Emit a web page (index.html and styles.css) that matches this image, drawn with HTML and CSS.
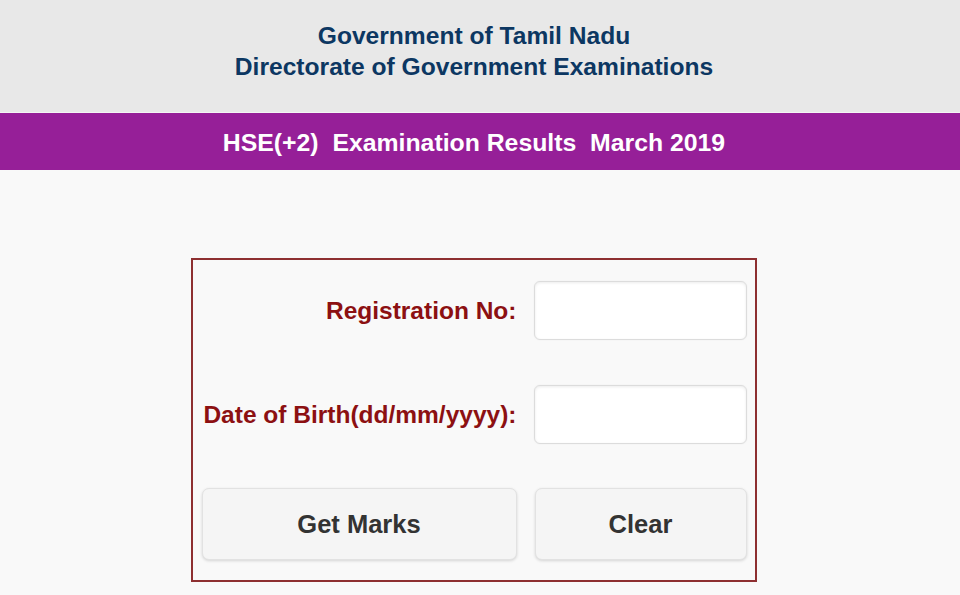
FILE: index.html
```html
<!DOCTYPE html>
<html lang="en">
<head>
<meta charset="utf-8">
<title>HSE(+2) Examination Results March 2019</title>
<link rel="stylesheet" href="styles.css">
</head>
<body>
<header class="top">
  <div class="org">Government of Tamil Nadu</div>
  <div class="org">Directorate of Government Examinations</div>
</header>
<div class="band">HSE(+2)&nbsp; Examination Results&nbsp; March 2019</div>
<main class="main">
  <form class="box">
    <label class="lbl" for="reg">Registration No:</label>
    <input class="inp" id="reg" type="text">
    <label class="lbl" for="dob">Date of Birth(dd/mm/yyyy):</label>
    <input class="inp" id="dob" type="text">
    <button class="btn" type="button">Get Marks</button>
    <button class="btn" type="button">Clear</button>
  </form>
</main>
</body>
</html>
```
FILE: styles.css
```css
html, body {
  margin: 0;
  padding: 0;
}
body {
  background: #f9f9f9;
  font-family: "Liberation Sans", Arial, sans-serif;
  font-weight: bold;
}
.top {
  background: #e8e8e8;
  height: 113px;
  box-sizing: border-box;
  padding: 20px 12px 0 0;
  text-align: center;
  color: #0c3762;
  font-size: 24.6px;
  line-height: 31px;
  border-bottom: 1px solid #f4f4f4;
}
.band {
  background: #961f98;
  color: #ffffff;
  height: 57px;
  box-sizing: border-box;
  padding: 3px 12px 0 0;
  line-height: 54px;
  text-align: center;
  font-size: 24.8px;
}
.main {
  display: flex;
  justify-content: center;
  padding-top: 89px;
  padding-right: 13px;
}
.box {
  display: grid;
  grid-template-columns: 315px 212px;
  column-gap: 18px;
  row-gap: 44px;
  padding: 20px 8px 20px 9px;
  border: 2px solid #8e2f31;
  margin: -1px 0 0 0;
}
.lbl {
  align-self: center;
  text-align: right;
  color: #8c1012;
  font-size: 24.5px;
  padding-top: 2px;
}
.inp {
  height: 59px;
  box-sizing: border-box;
  border: 1px solid #dcdcdc;
  border-radius: 6px;
  background: #ffffff;
  box-shadow: inset 0 1px 3px rgba(0,0,0,0.08), 0 0 2px rgba(0,0,0,0.06);
  margin: 1px 0 0 -1px;
}
.btn {
  height: 72px;
  box-sizing: border-box;
  border: 1px solid #e2e2e2;
  border-radius: 7px;
  background: #f5f5f5;
  box-shadow: 0 1px 3px rgba(0,0,0,0.15);
  color: #333333;
  font-family: "Liberation Sans", Arial, sans-serif;
  font-weight: bold;
  font-size: 25.5px;
  margin: 0;
  padding: 0;
}
```
